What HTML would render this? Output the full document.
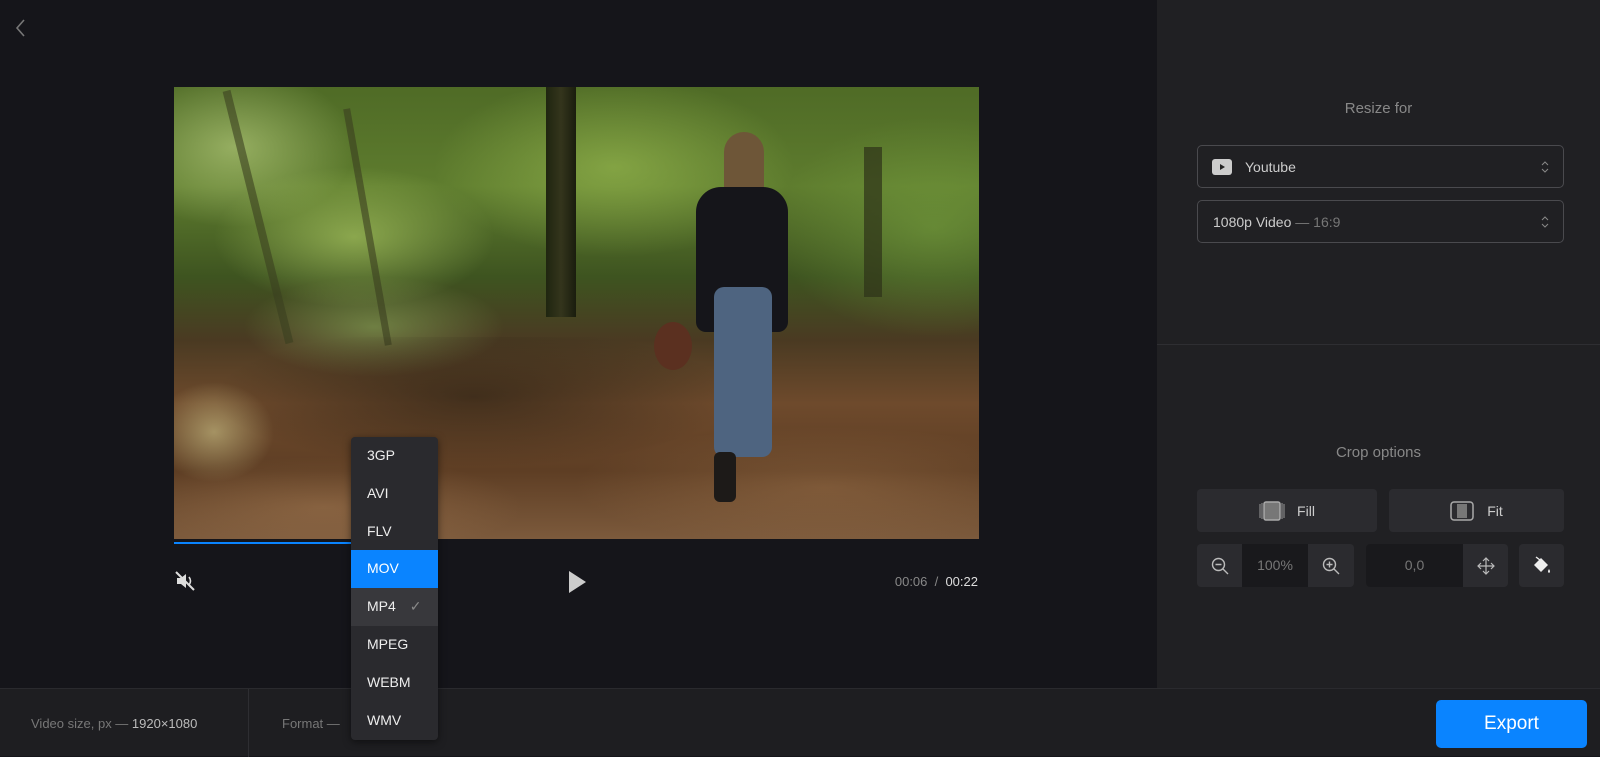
<!DOCTYPE html>
<html><head><meta charset="utf-8"><style>
*{margin:0;padding:0;box-sizing:border-box}
body{width:1600px;height:756px;background:#15151a;font-family:"Liberation Sans",sans-serif;position:relative;overflow:hidden;color:#ddd}
.abs{position:absolute}
.right{left:1157px;top:0;width:443px;height:688px;background:#202023}
.bottom{left:0;top:688px;width:1600px;height:68px;background:#1e1e21;border-top:1px solid #2a2a2e}
.video{left:174px;top:87px;width:805px;height:452px;overflow:hidden;
background:
radial-gradient(ellipse 60px 50px at 40px 345px,rgba(240,240,170,.45),transparent),
radial-gradient(ellipse 140px 70px at 180px 150px,rgba(190,220,110,.55),transparent),
radial-gradient(ellipse 120px 80px at 60px 60px,rgba(210,230,150,.5),transparent),
radial-gradient(ellipse 180px 90px at 440px 80px,rgba(170,205,90,.5),transparent),
radial-gradient(ellipse 160px 110px at 760px 140px,rgba(130,175,70,.45),transparent),
radial-gradient(ellipse 130px 50px at 200px 240px,rgba(150,190,100,.5),transparent),
linear-gradient(180deg,#4f6b26 0%,#5e7c2e 22%,#3e5420 42%,#4a3a22 56%,#6e4a2c 70%,#5e3e24 85%,#7c5a3c 100%)}
.sel{left:1197px;width:367px;height:43px;border:1px solid #4a4a4e;border-radius:5px;font-size:14px;color:#ccc;display:flex;align-items:center}
.btn{background:#2b2b2f;border-radius:4px;display:flex;align-items:center;justify-content:center;font-size:14px;color:#ccc}
.dd{left:351px;top:437px;width:87px;height:303px;background:#2a2a2e;border-radius:4px;box-shadow:0 2px 8px rgba(0,0,0,.5)}
.dd div{height:37.8px;line-height:37.8px;padding-left:16px;font-size:14px;color:#eee}
</style></head><body>
<svg class="abs" style="left:14px;top:18px" width="14" height="20" viewBox="0 0 14 20"><path d="M10 2 L3 10 L10 18" stroke="#777" stroke-width="1.6" fill="none"/></svg>

<div class="abs video">
  <div class="abs" style="left:372px;top:0;width:30px;height:230px;background:linear-gradient(90deg,#1f2510,#34351c,#1a1d0e)"></div>
  <div class="abs" style="left:690px;top:60px;width:18px;height:150px;background:#2d3218;opacity:.7"></div>
  <div class="abs" style="left:80px;top:0;width:8px;height:260px;background:#3b4020;transform:rotate(-14deg);opacity:.6"></div>
  <div class="abs" style="left:190px;top:20px;width:7px;height:240px;background:#3a3e20;transform:rotate(-10deg);opacity:.6"></div>
  <div class="abs" style="left:0;top:250px;width:805px;height:202px;background:radial-gradient(ellipse 260px 70px at 300px 60px,rgba(30,25,15,.55),transparent),radial-gradient(ellipse 250px 60px at 650px 150px,rgba(200,150,100,.25),transparent),radial-gradient(ellipse 200px 50px at 150px 170px,rgba(210,160,110,.25),transparent)"></div>
  <div class="abs" style="left:550px;top:45px;width:40px;height:90px;background:#6e5638;border-radius:20px 20px 8px 8px"></div>
  <div class="abs" style="left:522px;top:100px;width:92px;height:145px;background:#15151a;border-radius:25px 25px 10px 10px"></div>
  <div class="abs" style="left:540px;top:200px;width:58px;height:170px;background:#4e6480;border-radius:10px"></div>
  <div class="abs" style="left:540px;top:365px;width:22px;height:50px;background:#1d1a18;border-radius:6px"></div>
  <div class="abs" style="left:480px;top:235px;width:38px;height:48px;background:#5b3020;border-radius:50%"></div>
</div>
<div class="abs" style="left:174px;top:542px;width:177px;height:2px;background:#0a84ff"></div>

<svg class="abs" style="left:174px;top:570px" width="22" height="22" viewBox="0 0 22 22"><path d="M3 8h4l5-4v14l-5-4H3z" fill="#ddd"/><path d="M2 2 L20 20" stroke="#ddd" stroke-width="2"/><path d="M15 7q3 4 0 8" stroke="#ddd" stroke-width="1.6" fill="none"/></svg>
<svg class="abs" style="left:567px;top:570px" width="20" height="24" viewBox="0 0 20 24"><path d="M2 1 L19 12 L2 23z" fill="#ccc"/></svg>
<div class="abs" style="right:622px;top:574px;font-size:13px;color:#888">00:06 &nbsp;/&nbsp; <span style="color:#ddd">00:22</span></div>

<div class="abs right">
  <div class="abs" style="left:0;top:344px;width:443px;height:1px;background:#2e2e32"></div>
  <div class="abs" style="left:0;width:443px;top:100px;text-align:center;font-size:15px;color:#888">Resize for</div>
  <div class="abs" style="left:0;width:443px;top:444px;text-align:center;font-size:15px;color:#888">Crop options</div>
</div>
<div class="abs sel" style="top:145px;padding-left:14px">
  <svg width="20" height="16" viewBox="0 0 20 16"><rect x="0" y="0" width="20" height="16" rx="3" fill="#ccc"/><path d="M8 5l5 3-5 3z" fill="#222"/></svg>
  <span style="margin-left:13px">Youtube</span>
  <svg class="abs" style="right:14px;top:15px" width="8" height="12" viewBox="0 0 8 12"><path d="M1 4l3-3 3 3M1 8l3 3 3-3" stroke="#888" fill="none"/></svg>
</div>
<div class="abs sel" style="top:200px;padding-left:15px">1080p Video <span style="color:#777">&nbsp;— 16:9</span>
  <svg class="abs" style="right:14px;top:15px" width="8" height="12" viewBox="0 0 8 12"><path d="M1 4l3-3 3 3M1 8l3 3 3-3" stroke="#888" fill="none"/></svg>
</div>

<div class="abs btn" style="left:1197px;top:489px;width:180px;height:43px">
  <svg width="26" height="20" viewBox="0 0 26 20"><path d="M1 3v14M3 2v16M23 2v16M25 3v14" stroke="#999"/><rect x="5" y="1" width="16" height="18" rx="2" fill="#777" stroke="#aaa" stroke-width="1.5"/></svg>
  <span style="margin-left:12px">Fill</span></div>
<div class="abs btn" style="left:1389px;top:489px;width:175px;height:43px">
  <svg width="24" height="20" viewBox="0 0 24 20"><rect x="1" y="1" width="22" height="18" rx="3" fill="none" stroke="#aaa" stroke-width="1.5"/><rect x="7" y="3" width="10" height="14" fill="#777"/></svg>
  <span style="margin-left:13px">Fit</span></div>

<div class="abs btn" style="left:1197px;top:544px;width:157px;height:43px;justify-content:flex-start;overflow:hidden">
  <div style="width:45px;display:flex;justify-content:center"><svg width="18" height="18" viewBox="0 0 18 18"><circle cx="7.5" cy="7.5" r="6" fill="none" stroke="#bbb" stroke-width="1.4"/><path d="M4.5 7.5h6M12 12l5 5" stroke="#bbb" stroke-width="1.4"/></svg></div>
  <div style="width:66px;height:43px;background:#19191c;line-height:43px;text-align:center;color:#777">100%</div>
  <div style="width:46px;display:flex;justify-content:center"><svg width="18" height="18" viewBox="0 0 18 18"><circle cx="7.5" cy="7.5" r="6" fill="none" stroke="#bbb" stroke-width="1.4"/><path d="M4.5 7.5h6M7.5 4.5v6M12 12l5 5" stroke="#bbb" stroke-width="1.4"/></svg></div>
</div>
<div class="abs btn" style="left:1366px;top:544px;width:142px;height:43px;justify-content:flex-start;overflow:hidden">
  <div style="width:97px;height:43px;background:#19191c;line-height:43px;text-align:center;color:#777">0,0</div>
  <div style="width:45px;display:flex;justify-content:center"><svg width="18" height="18" viewBox="0 0 18 18"><path d="M9 1v16M1 9h16M6 4l3-3 3 3M6 14l3 3 3-3M4 6l-3 3 3 3M14 6l3 3-3 3" stroke="#bbb" stroke-width="1.2" fill="none"/></svg></div>
</div>
<div class="abs btn" style="left:1519px;top:544px;width:45px;height:43px">
  <svg width="22" height="20" viewBox="0 0 22 20"><path d="M3 9l7-7 7 7-7 7z" fill="#eee"/><path d="M5 1l4 3" stroke="#eee" stroke-width="1.4"/><path d="M18 13q2 3 0 4q-2-1 0-4z" fill="#eee"/></svg>
</div>

<div class="abs bottom">
  <div class="abs" style="left:248px;top:0;width:1px;height:68px;background:#2e2e32"></div>
  <div class="abs" style="left:31px;top:27px;font-size:13px;color:#777">Video size, px — <span style="color:#bbb">1920×1080</span></div>
  <div class="abs" style="left:282px;top:27px;font-size:13px;color:#777">Format —</div>
  <div class="abs" style="left:1436px;top:11px;width:151px;height:48px;background:#0a84ff;border-radius:5px;color:#fff;font-size:19px;text-align:center;line-height:48px">Export</div>
</div>

<div class="abs dd">
  <div>3GP</div><div>AVI</div><div>FLV</div>
  <div style="background:#0a84ff;color:#fff">MOV</div>
  <div style="background:#38383c">MP4 <span style="color:#888;margin-left:10px">✓</span></div>
  <div>MPEG</div><div>WEBM</div><div>WMV</div>
</div>
</body></html>
